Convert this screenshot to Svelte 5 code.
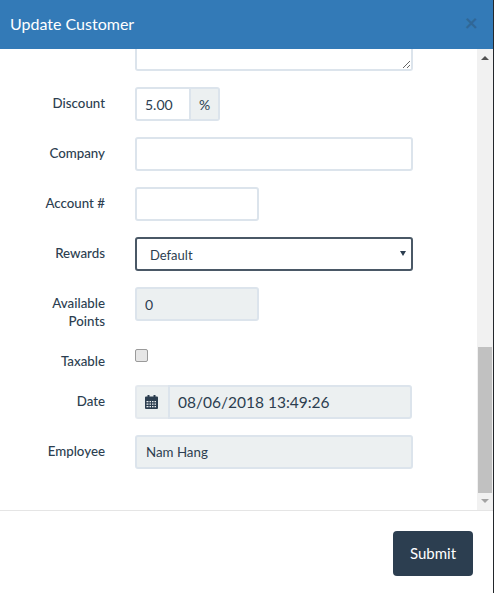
<script>
  const fullWidth = 'wide';
</script>

<div class="modal">
  <header class="modal-header">
    <h4>Update Customer</h4>
    <button class="close" type="button" aria-label="Close">×</button>
  </header>

  <div class="modal-body">
    <form class="form">
      <div class="row cut-row">
        <span class="label"></span>
        <textarea class="control cut {fullWidth}"></textarea>
      </div>

      <div class="row">
        <label class="label" for="discount">Discount</label>
        <div class="group discount">
          <input id="discount" class="control" value="5.00" />
          <span class="addon">%</span>
        </div>
      </div>

      <div class="row">
        <label class="label" for="company">Company</label>
        <input id="company" class="control wide" />
      </div>

      <div class="row">
        <label class="label" for="account">Account #</label>
        <input id="account" class="control narrow" />
      </div>

      <div class="row">
        <label class="label" for="rewards">Rewards</label>
        <div class="select-wrap wide">
          <select id="rewards" class="control focused">
            <option>Default</option>
          </select>
          <span class="caret"></span>
        </div>
      </div>

      <div class="row">
        <label class="label" for="points">Available Points</label>
        <input id="points" class="control narrow disabled" value="0" readonly />
      </div>

      <div class="row taxable">
        <label class="label" for="taxable">Taxable</label>
        <input id="taxable" class="check" type="checkbox" />
      </div>

      <div class="row">
        <label class="label" for="date">Date</label>
        <div class="group date-group">
          <span class="addon date-addon">
            <svg width="13" height="14" viewBox="0 0 13 14" aria-hidden="true">
              <path
                fill="#2c3e50"
                fill-rule="evenodd"
                d="M1 1.500h1.500V0h2v1.500h4V0h2v1.500H12a1 1 0 0 1 1 1V13a1 1 0 0 1-1 1H1a1 1 0 0 1-1-1V2.500a1 1 0 0 1 1-1zM1.500 6v1.200h2V6zm3 0v1.200h1.500V6zm2.500 0v1.200h1.500V6zm2.500 0v1.200h1.500V6zM1.500 8.500v1.200h2V8.500zm3 0v1.200h1.500V8.500zm2.500 0v1.200h1.500V8.500zm2.500 0v1.200h1.500V8.500zM1.500 11v1.200h2V11zm3 0v1.200h1.500V11zm2.500 0v1.200h1.500V11zm2.500 0v1.200h1.500V11z"
              />
            </svg>
          </span>
          <input id="date" class="control disabled" value="08/06/2018 13:49:26" readonly />
        </div>
      </div>

      <div class="row">
        <label class="label" for="employee">Employee</label>
        <input id="employee" class="control wide disabled small" value="Nam Hang" readonly />
      </div>
    </form>

    <div class="scrollbar">
      <span class="arrow up"></span>
      <div class="track"><div class="thumb"></div></div>
      <span class="arrow down"></span>
    </div>
  </div>

  <footer class="modal-footer">
    <button class="submit" type="button">Submit</button>
  </footer>
</div>

<style>
  :global(body) {
    margin: 0;
    background: #fff;
  }

  .modal {
    width: 494px;
    height: 593px;
    box-sizing: border-box;
    border-right: 1px solid #23272b;
    display: flex;
    flex-direction: column;
    overflow: hidden;
    font-family: Lato, "Liberation Sans", sans-serif;
    font-size: 14px;
    color: #2c3e50;
  }

  .modal-header {
    height: 49px;
    flex: none;
    background: #337ab7;
    display: flex;
    align-items: center;
    justify-content: space-between;
    padding: 0 15px 0 10px;
  }

  h4 {
    margin: 0 0 2px;
    font-size: 16px;
    font-weight: 400;
    color: #fff;
  }

  .close {
    border: 0;
    padding: 0;
    background: none;
    font-family: inherit;
    font-size: 23px;
    font-weight: 700;
    line-height: 1;
    color: #2c3e50;
    opacity: 0.3;
    margin-top: -4px;
  }

  .modal-body {
    height: 461px;
    flex: none;
    display: flex;
    overflow: hidden;
  }

  .form {
    flex: 1;
    min-width: 0;
  }

  .row {
    display: flex;
    align-items: flex-start;
    height: 34px;
    margin-bottom: 16px;
  }

  .row.cut-row {
    height: 22px;
  }

  .row.taxable {
    height: 32px;
  }

  .label {
    box-sizing: border-box;
    width: 105px;
    margin-right: 30px;
    padding: 7px 0 0 30px;
    flex: none;
    text-align: right;
    font-size: 13.3px;
    font-weight: 500;
    line-height: 18px;
  }

  .taxable .label {
    padding-top: 15px;
  }

  .control {
    box-sizing: border-box;
    height: 34px;
    border: 2px solid #dce4ec;
    border-radius: 3px;
    background: #fff;
    padding: 0 8px;
    font-family: inherit;
    font-size: 14px;
    color: #2c3e50;
    outline: none;
    min-width: 0;
  }

  .wide {
    width: 278px;
  }

  .narrow {
    width: 124px;
  }

  .control.small {
    font-size: 13.3px;
    padding-left: 9px;
  }

  .cut {
    display: block;
    height: 22px;
    min-height: 22px;
    border-top: 0;
    border-radius: 0 0 3px 3px;
    resize: vertical;
  }

  .select-wrap {
    position: relative;
  }

  .focused {
    appearance: none;
    display: block;
    width: 100%;
    border-color: #4a5866;
    padding: 1px 0 0 13px;
    font-size: 13px;
  }

  .caret {
    position: absolute;
    top: 14px;
    right: 7px;
    width: 0;
    height: 0;
    border-left: 3px solid transparent;
    border-right: 3px solid transparent;
    border-top: 5px solid #2c3e50;
    pointer-events: none;
  }

  .disabled {
    background: #ecf0f1;
  }

  .group {
    display: flex;
  }

  .group .control {
    flex: 1;
  }

  .discount {
    width: 85px;
  }

  .discount .control {
    width: 56px;
    flex: none;
    border-radius: 3px 0 0 3px;
  }

  .addon {
    box-sizing: border-box;
    height: 34px;
    flex: 1;
    display: flex;
    align-items: center;
    justify-content: center;
    background: #ecf0f1;
    border: 2px solid #dce4ec;
    border-left: 0;
    border-radius: 0 3px 3px 0;
  }

  .date-group {
    width: 277px;
  }

  .date-addon {
    width: 33px;
    flex: none;
    padding-right: 2px;
    border: 2px solid #e4e9ee;
    border-right: 0;
    border-radius: 3px 0 0 3px;
  }

  #date {
    border-radius: 0 3px 3px 0;
    font-size: 15.5px;
  }

  .check {
    appearance: none;
    box-sizing: border-box;
    width: 13px;
    height: 13px;
    margin: 12px 0 0;
    background: #e6e6e6;
    border: 1px solid #9a9a9a;
    border-radius: 2px;
  }

  .scrollbar {
    width: 16px;
    flex: none;
    background: #f1f1f1;
    display: flex;
    flex-direction: column;
    align-items: center;
  }

  .track {
    flex: 1;
    width: 14px;
    display: flex;
    flex-direction: column;
    justify-content: flex-end;
  }

  .thumb {
    height: 146px;
    background: #c1c1c1;
  }

  .arrow {
    flex: none;
    width: 0;
    height: 0;
    border-left: 4px solid transparent;
    border-right: 4px solid transparent;
  }

  .arrow.up {
    margin: 7px 0 5px;
    border-bottom: 4px solid #505050;
  }

  .arrow.down {
    margin: 6px 0 7px;
    border-top: 4px solid #a3a3a3;
  }

  .modal-footer {
    flex: 1;
    border-top: 1px solid #e5e5e5;
    display: flex;
    justify-content: flex-end;
    align-items: flex-start;
    padding: 20px 20px 0 0;
  }

  .submit {
    width: 80px;
    height: 45px;
    border: 0;
    border-radius: 4px;
    background: #2c3e50;
    color: #fff;
    font-family: inherit;
    font-size: 15px;
    padding: 0 0 2px;
  }
</style>
